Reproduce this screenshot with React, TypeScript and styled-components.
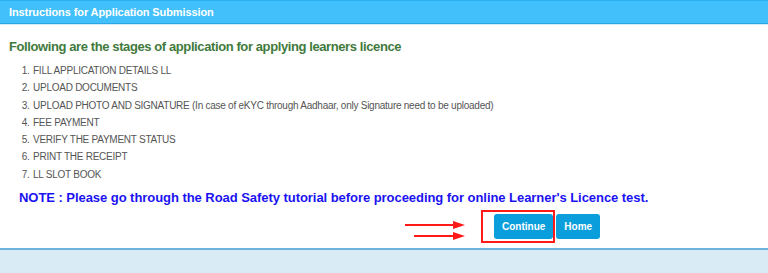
import styled, { createGlobalStyle } from "styled-components";

const GlobalStyle = createGlobalStyle`
    html, body {
        margin: 0;
        padding: 0;
        background: #d9ecf6;
        font-family: "Liberation Sans", Arial, sans-serif;
    }
`;

const steps = [
    "FILL APPLICATION DETAILS LL",
    "UPLOAD DOCUMENTS",
    "UPLOAD PHOTO AND SIGNATURE (In case of eKYC through Aadhaar, only Signature need to be uploaded)",
    "FEE PAYMENT",
    "VERIFY THE PAYMENT STATUS",
    "PRINT THE RECEIPT",
    "LL SLOT BOOK",
];

const App = () => {
    return (
        <>
            <GlobalStyle />
            <Panel>
                <Header>Instructions for Application Submission</Header>
                <Body>
                    <Heading>Following are the stages of application for applying learners licence</Heading>
                    <StepList>
                        {steps.map((s) => (
                            <Step key={s}>{s}</Step>
                        ))}
                    </StepList>
                    <Note>NOTE : Please go through the Road Safety tutorial before proceeding for online Learner's Licence test.</Note>
                    <ButtonRow>
                        <Arrows width="62" height="24" viewBox="0 0 62 24">
                            <line x1="0" y1="6" x2="50" y2="6" stroke="#ff1a1a" strokeWidth="2" />
                            <polygon points="48,2 60,6 48,10" fill="#ff1a1a" />
                            <line x1="9" y1="17" x2="50" y2="17" stroke="#ff1a1a" strokeWidth="2" />
                            <polygon points="48,13 60,17 48,21" fill="#ff1a1a" />
                        </Arrows>
                        <Highlight>
                            <Button>Continue</Button>
                        </Highlight>
                        <Button>Home</Button>
                    </ButtonRow>
                </Body>
            </Panel>
        </>
    );
};

const Panel = styled.div`
    background: #ffffff;
    border-bottom: 2px solid #6cb4dc;
`;

const Header = styled.div`
    height: 22px;
    line-height: 22px;
    padding-left: 9px;
    background-color: #42c0fc;
    border-top: 1px solid #2ab0f0;
    border-bottom: 1px solid #2aa6e4;
    box-shadow: 0 1px 0 #d4ecf8;
    color: #ffffff;
    font-size: 11px;
    letter-spacing: -0.1px;
    font-weight: bold;
`;

const Body = styled.div`
    padding: 14px 9px 5px 9px;
`;

const Heading = styled.div`
    color: #3f7a3c;
    font-size: 13px;
    letter-spacing: -0.4px;
    font-weight: bold;
    line-height: 18px;
`;

const StepList = styled.ol`
    margin: 6px 0 0 0;
    padding-left: 23px;
    color: #555555;
    font-size: 10px;
    letter-spacing: -0.25px;
`;

const Step = styled.li`
    line-height: 17.3px;
    padding-left: 1px;
`;

const Note = styled.div`
    margin: 6px 0 0 10px;
    color: #1a12f2;
    font-size: 13px;
    letter-spacing: -0.05px;
    font-weight: bold;
    line-height: 18px;
`;

const ButtonRow = styled.div`
    display: flex;
    align-items: center;
    margin-top: 3px;
    padding-left: 396px;
`;

const Arrows = styled.svg`
    margin-top: 8px;
    margin-right: 14px;
`;

const Highlight = styled.div`
    display: flex;
    padding: 2px 0 2px 10px;
    border: 2px solid #ff1a1a;
`;

const Button = styled.button`
    height: 25px;
    padding: 0 8px;
    margin-left: 1px;
    border: none;
    border-radius: 3px;
    background-color: #0a9edc;
    color: #ffffff;
    font-family: "Liberation Sans", Arial, sans-serif;
    font-size: 10px;
    font-weight: bold;

    & + & {
        padding: 0 7px;
    }
`;

export default App;
